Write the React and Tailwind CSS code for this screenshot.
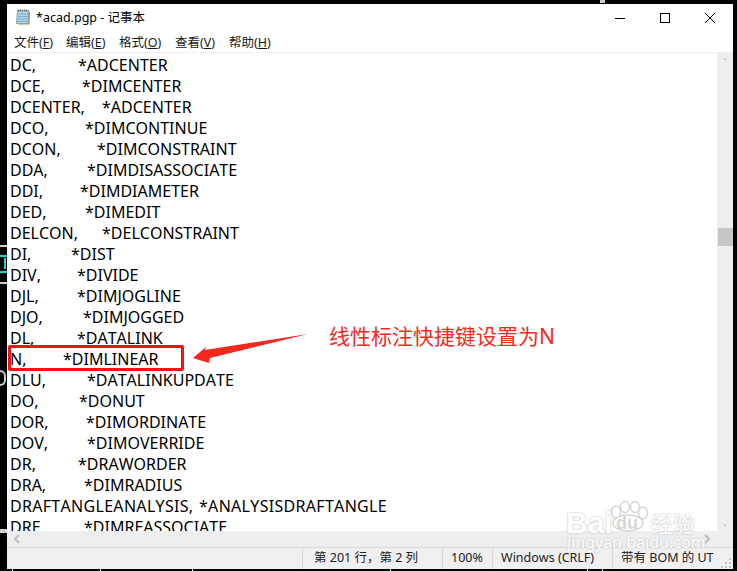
import React from "react";

// [command, x of the star relative to the text column, target]
const ROWS = [
  ["DC,", 68, "*ADCENTER"],
  ["DCE,", 72, "*DIMCENTER"],
  ["DCENTER,", 92, "*ADCENTER"],
  ["DCO,", 75, "*DIMCONTINUE"],
  ["DCON,", 87, "*DIMCONSTRAINT"],
  ["DDA,", 77, "*DIMDISASSOCIATE"],
  ["DDI,", 70, "*DIMDIAMETER"],
  ["DED,", 75, "*DIMEDIT"],
  ["DELCON,", 92, "*DELCONSTRAINT"],
  ["DI,", 61, "*DIST"],
  ["DIV,", 67, "*DIVIDE"],
  ["DJL,", 67, "*DIMJOGLINE"],
  ["DJO,", 73, "*DIMJOGGED"],
  ["DL,", 67, "*DATALINK"],
  ["N,", 53, "*DIMLINEAR"],
  ["DLU,", 77, "*DATALINKUPDATE"],
  ["DO,", 69, "*DONUT"],
  ["DOR,", 76, "*DIMORDINATE"],
  ["DOV,", 77, "*DIMOVERRIDE"],
  ["DR,", 68, "*DRAWORDER"],
  ["DRA,", 74, "*DIMRADIUS"],
  ["DRAFTANGLEANALYSIS,", 189, "*ANALYSISDRAFTANGLE"],
  ["DRE,", 74, "*DIMREASSOCIATE"],
];

const MENUS = [
  ["文件", "F"],
  ["编辑", "E"],
  ["格式", "O"],
  ["查看", "V"],
  ["帮助", "H"],
];

// bits of the desktop showing under the window's bottom edge
const BOTTOM_TICKS = [12, 100, 192, 390, 587, 602];

const NotepadIcon = () => (
  <svg width="16" height="17" viewBox="0 0 16 17">
    <path d="M3.5 2.5h11.5l-.5 13H3z" fill="#b08a5a" />
    <path d="M2.5 1.5h11l-.5 13H1.5z" fill="#a9d3e6" stroke="#8aa4b0" />
    <path d="M3.5 5h9M3.3 7.5h9M3 10h9M2.8 12.5h9" stroke="#7fb0c6" strokeWidth="1" />
    <path d="M3 1.5h10" stroke="#666666" strokeWidth="2" strokeDasharray="1 1" />
  </svg>
);

const Chevron = ({ d, color = "#606060" }) => (
  <svg width="10" height="10" viewBox="0 0 10 10">
    <path d={d} fill="none" stroke={color} strokeWidth="2" />
  </svg>
);

const Grip = () => (
  <svg className="absolute right-[1px] top-[9px]" width="11" height="11" viewBox="0 0 11 11">
    <path d="M8 1h2v2H8zM4 5h2v2H4zM8 5h2v2H8zM0 9h2v2H0zM4 9h2v2H4zM8 9h2v2H8z" fill="#c4c4c4" />
  </svg>
);

const Paw = () => (
  <svg className="absolute left-[608px] top-[500px]" width="42" height="34" viewBox="0 0 42 34">
    <g fill="#ffffff" stroke="#d6d6d6" strokeWidth="1.5">
      <ellipse cx="8" cy="12" rx="4.5" ry="6" />
      <ellipse cx="17" cy="7" rx="4.5" ry="5.5" />
      <ellipse cx="27" cy="7" rx="4.5" ry="5.5" />
      <ellipse cx="35" cy="13" rx="4.5" ry="6" />
      <ellipse cx="20" cy="23" rx="15" ry="8" />
    </g>
  </svg>
);

export default function App() {
  return (
    <div className="relative h-[571px] w-[737px] overflow-hidden bg-black pl-[7px] pt-1 font-['Noto_Sans','Noto_Sans_CJK_SC',sans-serif] [font-kerning:none]">
      {/* window */}
      <div className="flex h-[565px] w-[726px] flex-col bg-white text-black">
        <div className="flex h-[27px] shrink-0 items-center">
          <div className="ml-2 mr-[5px]">
            <NotepadIcon />
          </div>
          <span className="pt-[1px] text-[12.5px]">*acad.pgp - 记事本</span>
          <div className="ml-auto flex items-center">
            <svg width="12" height="12" viewBox="0 0 12 12" className="mr-[33px]">
              <path d="M1 6.5h10" stroke="#000" />
            </svg>
            <svg width="12" height="12" viewBox="0 0 12 12" className="mr-[33px]">
              <rect x="1.5" y="1.5" width="9" height="9" fill="none" stroke="#000" />
            </svg>
            <svg width="12" height="12" viewBox="0 0 12 12" className="mr-[17px]">
              <path d="M1 1l10 10M11 1L1 11" stroke="#000" />
            </svg>
          </div>
        </div>

        <div className="grid h-[22px] shrink-0 grid-cols-[52px_53px_56px_54px_auto] items-center border-b border-[#f0f0f0] pl-[7px] pt-[3px] text-[12.5px] leading-4 text-[#1a1a1a]">
          {MENUS.map(([name, key]) => (
            <span key={key}>
              {name}(<span className="underline">{key}</span>)
            </span>
          ))}
        </div>

        <div className="flex min-h-0 flex-1">
          <div className="min-w-0 flex-1 overflow-hidden pl-[3px] pt-[2px] text-base">
            {ROWS.map(([cmd, x, target]) => (
              <div
                key={cmd}
                className={`flex h-[21px] items-center whitespace-pre leading-[21px] ${
                  x > 150 ? "tracking-[0.3px]" : ""
                }`}
              >
                <span className="shrink-0" style={{ width: x }}>
                  {cmd}
                </span>
                <span>{target}</span>
              </div>
            ))}
          </div>
          <div className="flex w-4 shrink-0 flex-col items-center justify-between bg-[#eeeeee] py-[5px]">
            <Chevron d="M1 7l4-4 4 4" />
            <div className="mb-[278px] mt-[167px] h-[18px] w-[15px] shrink-0 bg-[#c6c6c6]" />
            <Chevron d="M1 3l4 4 4-4" />
          </div>
        </div>

        <div className="flex h-4 shrink-0 items-center justify-between bg-[#eeeeee] pl-[5px] pr-[21px]">
          <Chevron d="M7 1L3 5l4 4" color="#bdbdbd" />
          <Chevron d="M3 1l4 4-4 4" color="#bdbdbd" />
        </div>

        <div className="relative flex h-[22px] shrink-0 items-center overflow-hidden border-t border-[#d9d9d9] bg-[#f0f0f0] text-[12.5px] text-[#222222]">
          <div className="h-full w-[296px] shrink-0 border-r border-[#d9d9d9]" />
          <div className="flex h-full w-[140px] shrink-0 items-center border-r border-[#d9d9d9] pl-[11px]">
            第 201 行，第 2 列
          </div>
          <div className="flex h-full w-[50px] shrink-0 items-center border-r border-[#d9d9d9] pl-[8px]">
            100%
          </div>
          <div className="flex h-full w-[120px] shrink-0 items-center border-r border-[#d9d9d9] pl-[8px]">
            Windows (CRLF)
          </div>
          <div className="flex h-full w-[104px] shrink-0 items-center whitespace-nowrap pl-[8px]">
            带有 BOM 的 UT
          </div>
          <Grip />
        </div>
      </div>

      {/* red annotation */}
      <div className="absolute left-2 top-[345px] h-[26px] w-[176px] rounded-[2px] border-[3px] border-[#f01414]" />
      <svg className="absolute left-[190px] top-[330px]" width="122" height="36" viewBox="0 0 122 36">
        <path d="M3 28L16 17l-1 3L118 4 20 28l-1 5z" fill="#f5281e" />
      </svg>
      <span className="absolute left-[329px] top-[322px] text-[21px] leading-[29px] text-[#f52a1e]">
        线性标注快捷键设置为N
      </span>

      {/* watermark */}
      <Paw />
      <span className="absolute left-[566px] top-[508px] font-['Liberation_Sans',sans-serif] text-[30px] font-bold leading-[30px] text-white [text-shadow:0_0_2px_#a8a8a8]">
        Bai
      </span>
      <span className="absolute left-[616px] top-[513px] font-['Liberation_Sans',sans-serif] text-lg font-bold leading-5 text-[#d6d6d6]">
        du
      </span>
      <span className="absolute left-[651px] top-[508px] text-[22px] leading-[30px] text-white [text-shadow:0_0_2px_#a8a8a8]">
        经验
      </span>
      <span className="absolute left-[567px] top-[532px] text-base leading-5 text-white [text-shadow:0_0_2px_#b8b8b8]">
        jingyan.baidu.com
      </span>

      {/* desktop scraps behind the window */}
      <div className="absolute left-0 top-[255px] h-[2px] w-[7px] bg-[#19d3dc]" />
      <div className="absolute left-[4px] top-[258px] h-[11px] w-[2px] bg-[#19d3dc]" />
      <div className="absolute left-0 top-[271px] h-[2px] w-[7px] bg-[#19d3dc]" />
      <div className="absolute left-0 top-[370px] h-[16px] w-[6px] rounded-r-md border-2 border-l-0 border-[#cccccc]" />
      <div className="absolute left-0 top-[245px] h-[2px] w-[7px] bg-[#cccccc]" />
      <div className="absolute left-0 top-[282px] h-[2px] w-[7px] bg-[#cccccc]" />
      <div className="absolute left-0 top-[529px] h-[4px] w-[7px] bg-[#d0d0d0]" />
      <div className="absolute left-[600px] top-0 h-[3px] w-[5px] bg-[#cccccc]" />
      {BOTTOM_TICKS.map((x) => (
        <div key={x} className="absolute bottom-0 h-[2px] w-[1px] bg-white" style={{ left: x }} />
      ))}
    </div>
  );
}
